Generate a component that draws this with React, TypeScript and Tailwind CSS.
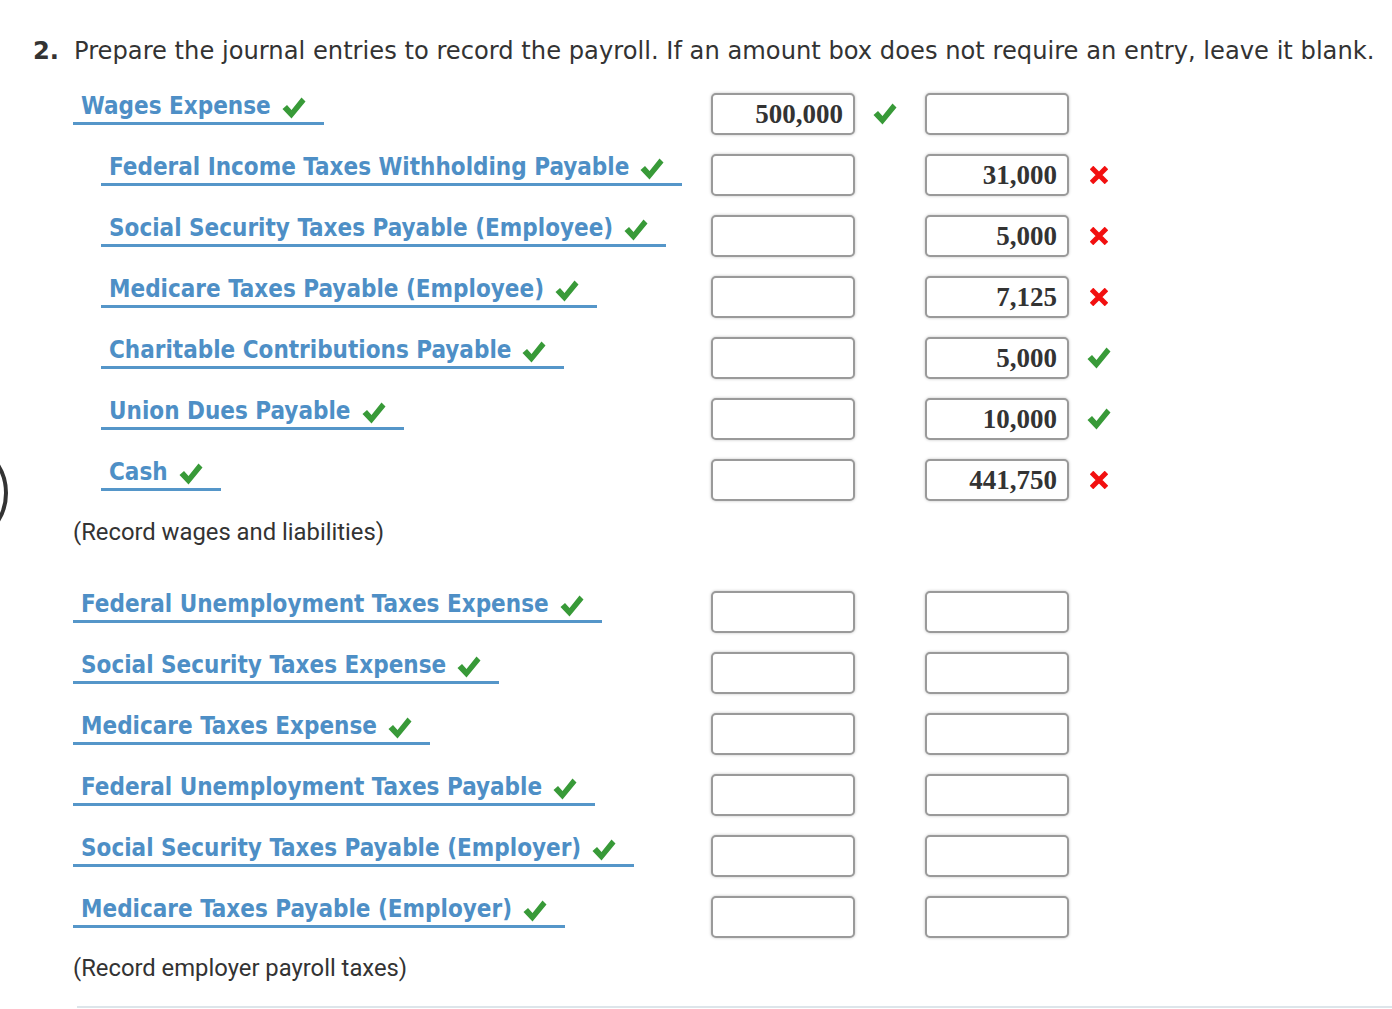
import React from "react";

type Row = {
  label: string;
  indent?: boolean;
  debit?: string;
  debitMark?: "ok" | "bad";
  credit?: string;
  creditMark?: "ok" | "bad";
};

const wagesRows: Row[] = [
  { label: "Wages Expense", debit: "500,000", debitMark: "ok" },
  { label: "Federal Income Taxes Withholding Payable", indent: true, credit: "31,000", creditMark: "bad" },
  { label: "Social Security Taxes Payable (Employee)", indent: true, credit: "5,000", creditMark: "bad" },
  { label: "Medicare Taxes Payable (Employee)", indent: true, credit: "7,125", creditMark: "bad" },
  { label: "Charitable Contributions Payable", indent: true, credit: "5,000", creditMark: "ok" },
  { label: "Union Dues Payable", indent: true, credit: "10,000", creditMark: "ok" },
  { label: "Cash", indent: true, credit: "441,750", creditMark: "bad" },
];

const employerRows: Row[] = [
  { label: "Federal Unemployment Taxes Expense" },
  { label: "Social Security Taxes Expense" },
  { label: "Medicare Taxes Expense" },
  { label: "Federal Unemployment Taxes Payable" },
  { label: "Social Security Taxes Payable (Employer)" },
  { label: "Medicare Taxes Payable (Employer)" },
];

function Check({ className = "" }: { className?: string }) {
  return (
    <svg className={className} viewBox="0 0 24 24" width="24" height="24">
      <polygon points="0.5,13 5,9 9.5,14 19.5,1.5 23.5,5.5 9.5,22.5" fill="#389a38" />
    </svg>
  );
}

function Cross({ className = "" }: { className?: string }) {
  return (
    <svg className={className} viewBox="0 0 18 18" width="18" height="18">
      <path d="M1.5 1.5 L16.5 16.5 M16.5 1.5 L1.5 16.5" stroke="#f21010" strokeWidth="5" />
    </svg>
  );
}

function Mark({ kind }: { kind?: "ok" | "bad" }) {
  if (kind === "ok") return <Check />;
  if (kind === "bad") return <Cross className="ml-[3px]" />;
  return null;
}

function AmountBox({ value }: { value?: string }) {
  return (
    <div className="w-[144px] h-[42px] border-2 border-[#9a9a9a] rounded-[5px] bg-white shadow-[0_0_3px_rgba(0,0,0,0.25)] flex items-center justify-end pr-[10px] text-[27px] font-bold text-[#333] font-['Liberation_Serif',serif]">
      {value}
    </div>
  );
}

function JournalRow({ row }: { row: Row }) {
  return (
    <div className="flex h-[61px] items-start">
      <div className={`w-[638px] ${row.indent ? "pl-[28px]" : ""}`}>
        <div className="inline-flex items-end mt-[8px] pl-[8px] pr-[18px] pb-[2px] border-b-[3px] border-[#5596c9]">
          <span className="text-[#4e8fc6] font-bold text-[24px] leading-[28px] font-['DejaVu_Sans_Condensed','DejaVu_Sans',sans-serif]">
            {row.label}
          </span>
          <Check className="ml-[11px] mb-[0px]" />
        </div>
      </div>
      <div className="mt-[9px] flex items-center">
        <AmountBox value={row.debit} />
        <div className="w-[70px] h-[42px] flex items-center pl-[18px]">
          <Mark kind={row.debitMark} />
        </div>
        <AmountBox value={row.credit} />
        <div className="h-[42px] flex items-center pl-[18px]">
          <Mark kind={row.creditMark} />
        </div>
      </div>
    </div>
  );
}

export default function App() {
  return (
    <div className="relative w-[1392px] h-[1009px] overflow-hidden bg-white">
      <svg className="absolute left-0 top-[430px]" width="12" height="130" viewBox="0 0 12 130">
        <circle cx="-46" cy="63" r="52" fill="none" stroke="#333" strokeWidth="4" />
      </svg>

      <div className="pl-[33px] pt-[36px]">
        <div className="flex text-[#333] text-[24.2px] leading-[30px] font-['DejaVu_Sans',Verdana,sans-serif]">
          <span className="w-[41px] font-bold">2.</span>
          <span className="whitespace-nowrap">
            Prepare the journal entries to record the payroll. If an amount box does not require an entry, leave it blank.
          </span>
        </div>

        <div className="pl-[40px] mt-[18px]">
          {wagesRows.map((r) => (
            <JournalRow key={r.label} row={r} />
          ))}
          <p className="mt-[7px] mb-[36px] text-[#333] text-[23.8px] leading-[28px] font-['Roboto',sans-serif]">
            (Record wages and liabilities)
          </p>

          {employerRows.map((r) => (
            <JournalRow key={r.label} row={r} />
          ))}
          <p className="mt-[6px] text-[#333] text-[23.8px] leading-[28px] font-['Roboto',sans-serif]">
            (Record employer payroll taxes)
          </p>
        </div>
      </div>

      <div className="absolute left-[77px] right-0 bottom-[1px] h-[2px] bg-[#dde5ea]" />
    </div>
  );
}
